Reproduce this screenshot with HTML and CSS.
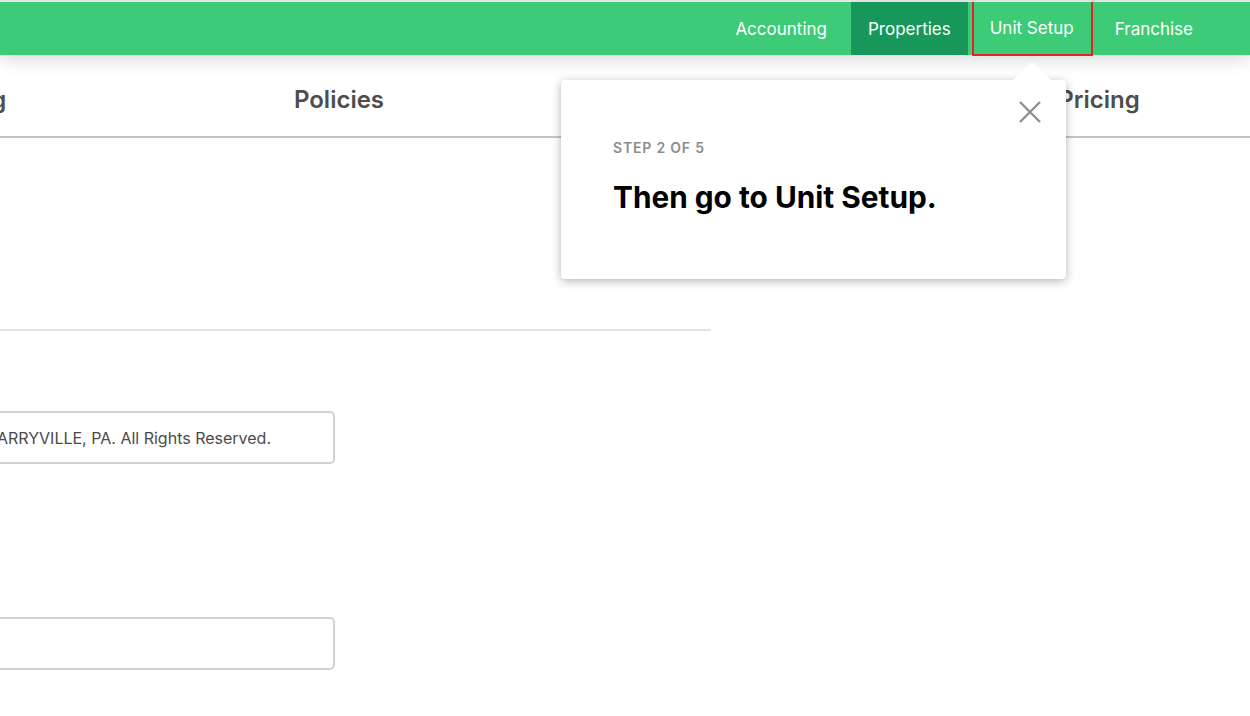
FILE: index.html
```html
<!DOCTYPE html>
<html>
<head>
<meta charset="utf-8">
<link rel="stylesheet" href="styles.css">
</head>
<body>
<div class="page">
  <header class="topbar">
    <nav class="nav">
      <a class="nav-item">Accounting</a>
      <a class="nav-item active">Properties</a>
      <a class="nav-item highlighted">Unit Setup</a>
      <a class="nav-item">Franchise</a>
    </nav>
  </header>
  <div class="subtabs">
    <div class="subtab">Booking</div>
    <div class="subtab">Policies</div>
    <div class="subtab">Amenities</div>
    <div class="subtab">Pricing</div>
  </div>
  <main class="content">
    <div class="form-col">
      <div class="section-space"></div>
      <div class="divider"></div>
      <div class="field field-first">
        <div class="input">© 2019 PROPERTY MANAGEMENT, CARRYVILLE, PA. All Rights Reserved.</div>
      </div>
      <div class="field field-second">
        <div class="input"></div>
      </div>
    </div>
  </main>
  <div class="tour">
    <div class="tour-arrow"></div>
    <button class="tour-close" aria-label="Close">
      <svg width="24" height="24" viewBox="0 0 24 24"><path d="M2 2 L22 22 M22 2 L2 22" stroke="#8e8e93" stroke-width="2.4" fill="none"/></svg>
    </button>
    <div class="tour-step">STEP 2 OF 5</div>
    <div class="tour-title">Then go to Unit Setup.</div>
  </div>
</div>
</body>
</html>
```
FILE: styles.css
```css
* { box-sizing: border-box; }
html, body { margin: 0; padding: 0; }
body {
  background: #fff;
  font-family: Inter, "Noto Sans", "Liberation Sans", sans-serif;
  overflow: hidden;
  width: 1250px;
  height: 716px;
}
.page {
  position: relative;
  width: 1250px;
  height: 716px;
  overflow: hidden;
  border-top: 2px solid #e4e4e4;
}
.topbar {
  height: 53px;
  background: #3dcb78;
  box-shadow: 0 4px 18px rgba(0,0,0,0.16);
  position: relative;
  z-index: 2;
}
.nav {
  display: flex;
  justify-content: flex-end;
  height: 100%;
  padding-right: 41px;
}
.nav-item {
  display: flex;
  align-items: center;
  padding: 0 16px;
  color: #fff;
  font-size: 17px;
  margin-left: 4px;
  height: 100%;
}
.nav-item.active {
  background: #17985a;
  padding: 0 17px;
  margin-left: 8px;
}
.nav-item.highlighted {
  border: 2px solid #e8202a;
  margin-top: -2px;
  height: 56px;
  padding: 0 17px 0 16px;
  margin-right: 2px;
}
.subtabs {
  display: flex;
  margin-left: -231px;
  height: 83px;
  border-bottom: 2px solid #c6c6c6;
  width: 1530px;
}
.subtab {
  flex: 0 0 380px;
  text-align: center;
  font-size: 24px;
  font-weight: 600;
  color: #4d4d4d;
  padding-top: 30px;
}
.content { display: flex; }
.form-col {
  width: 711px;
}
.section-space { height: 191px; }
.divider { height: 2px; background: #e2e2e2; }
.field { margin-left: -20px; width: 355px; }
.field-first { margin-top: 80px; }
.field-second { margin-top: 153px; }
.input {
  height: 53px;
  border: 2px solid #d2d2d2;
  border-radius: 5px;
  display: flex;
  align-items: center;
  justify-content: flex-end;
  padding-right: 62px;
  font-size: 16px;
  color: #4a4a4a;
  white-space: nowrap;
  overflow: hidden;
}
.tour {
  position: absolute;
  left: 561px;
  top: 78px;
  width: 505px;
  height: 199px;
  background: #fff;
  border-radius: 4px;
  box-shadow: 0 2px 10px rgba(0,0,0,0.3);
  padding: 59px 52px 0;
  z-index: 3;
}
.tour-arrow {
  position: absolute;
  top: -18px;
  left: 451px;
  width: 0; height: 0;
  border-left: 20px solid transparent;
  border-right: 20px solid transparent;
  border-bottom: 19px solid #fff;
}
.tour-close {
  position: absolute;
  top: 20px;
  right: 24px;
  border: 0;
  background: none;
  padding: 0;
  width: 24px; height: 24px;
}
.tour-close svg { display: block; }
.tour-step {
  font-size: 14px;
  font-weight: 600;
  letter-spacing: 0.8px;
  color: #8c8c8c;
}
.tour-title {
  margin-top: 23px;
  font-size: 29.8px;
  font-weight: 700;
  color: #000;
}
```
